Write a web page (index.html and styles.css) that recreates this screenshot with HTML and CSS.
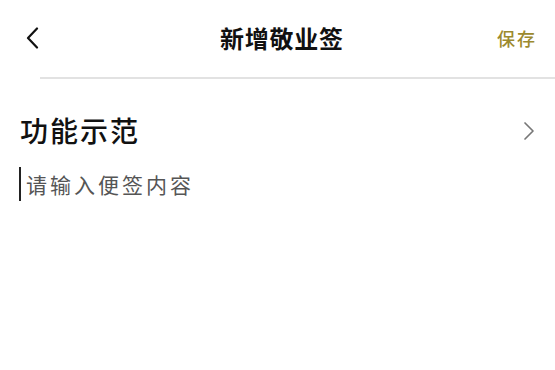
FILE: index.html
```html
<!DOCTYPE html>
<html lang="zh">
<head>
<meta charset="utf-8">
<link rel="stylesheet" href="styles.css">
</head>
<body>
<div class="page">
  <header class="topbar">
    <div class="back">
      <svg width="14" height="22" viewBox="0 0 14 22"><path d="M11 1.5 L2 11 L11 20.5" fill="none" stroke="#111" stroke-width="2.2" stroke-linecap="round" stroke-linejoin="round"/></svg>
    </div>
    <h1 class="title">新增敬业签</h1>
    <div class="save">保存</div>
  </header>
  <div class="divider"></div>
  <div class="row">
    <span class="row-label">功能示范</span>
    <svg class="row-arrow" width="12" height="20" viewBox="0 0 12 20"><path d="M2 2 L10 10 L2 18" fill="none" stroke="#777" stroke-width="1.7" stroke-linecap="round" stroke-linejoin="round"/></svg>
  </div>
  <div class="editor">
    <span class="cursor"></span>
    <span class="placeholder">请输入便签内容</span>
  </div>
</div>
</body>
</html>
```
FILE: styles.css
```css
* { box-sizing: border-box; }
html, body { margin: 0; padding: 0; background: #fff; }
body { font-family: "Noto Sans CJK SC", "Noto Sans", sans-serif; width: 555px; height: 370px; overflow: hidden; }
.page { display: flex; flex-direction: column; }
.topbar {
  height: 77px;
  display: grid;
  grid-template-columns: 1fr auto 1fr;
  align-items: center;
  padding: 0 18px 0 26px;
}
.back { display: flex; align-items: center; height: 22px; margin-top: -2px; }
.title {
  margin: 0;
  font-size: 24px;
  font-weight: 700;
  color: #111;
  letter-spacing: 0.8px;
  margin-right: -0.8px;
  line-height: 30px;
  margin-top: -2px;
}
.save {
  justify-self: end;
  font-size: 18px;
  font-weight: 500;
  color: #9c8a2e;
  letter-spacing: 2px;
  line-height: 24px;
  margin-top: -2px;
}
.divider { height: 2px; margin-left: 40px; background: #e2e2e2; }
.row {
  display: flex;
  align-items: center;
  justify-content: space-between;
  padding: 36px 20px 0 20px;
  height: 66px;
}
.row-label {
  font-size: 28px;
  font-weight: 500;
  color: #111;
  letter-spacing: 2px;
  line-height: 30px;
}
.row-arrow { margin-top: 2px; }
.editor {
  display: flex;
  align-items: center;
  margin-top: 22px;
  padding-left: 19px;
  height: 34px;
}
.cursor { width: 2px; height: 34px; background: #222; }
.placeholder {
  margin-left: 5px;
  font-size: 21px;
  color: #555;
  letter-spacing: 3px;
  line-height: 24px;
}
```
